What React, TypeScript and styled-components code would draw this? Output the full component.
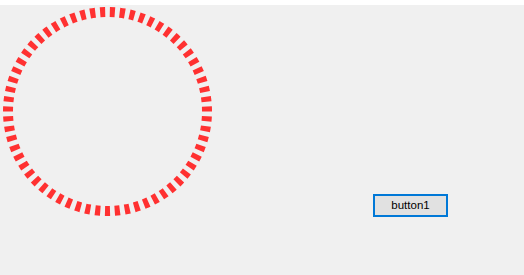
import React from "react";
import styled, { createGlobalStyle } from "styled-components";

const GlobalStyle = createGlobalStyle`
  html, body {
    margin: 0;
    padding: 0;
    background: #ffffff;
    width: 524px;
    height: 275px;
    overflow: hidden;
  }
`;

const Window = styled.div`
  display: flex;
  flex-direction: column;
  width: 524px;
  height: 275px;
`;

const TopStrip = styled.div`
  height: 5px;
  background: #ffffff;
`;

const Form = styled.div`
  flex: 1;
  display: flex;
  align-items: flex-start;
  background: #f0f0f0;
`;

const Ring = styled.svg`
  display: block;
  flex: none;
`;

const Button = styled.button`
  flex: none;
  margin: 189px 0 0 157px;
  width: 75px;
  height: 23px;
  padding: 0;
  box-sizing: border-box;
  border: 2px solid #0078d7;
  background: #e1e1e1;
  color: #000;
  font-family: "Liberation Sans", Arial, sans-serif;
  font-size: 11.5px;
  line-height: 1;
  cursor: default;
  outline: none;
`;

const DASHES = 63;

export default function App() {
  return (
    <Window>
      <GlobalStyle />
      <TopStrip />
      <Form>
        <Ring width="216" height="216" viewBox="0 0 216 216">
          <circle
            cx="107.5"
            cy="106.5"
            r="99.5"
            fill="none"
            stroke="#ff3131"
            strokeWidth="10"
            pathLength={DASHES * 10}
            strokeDasharray="5.2 4.8"
            strokeDashoffset={2.6 - (DASHES * 10) / 4}
          />
        </Ring>
        <Button>button1</Button>
      </Form>
    </Window>
  );
}
